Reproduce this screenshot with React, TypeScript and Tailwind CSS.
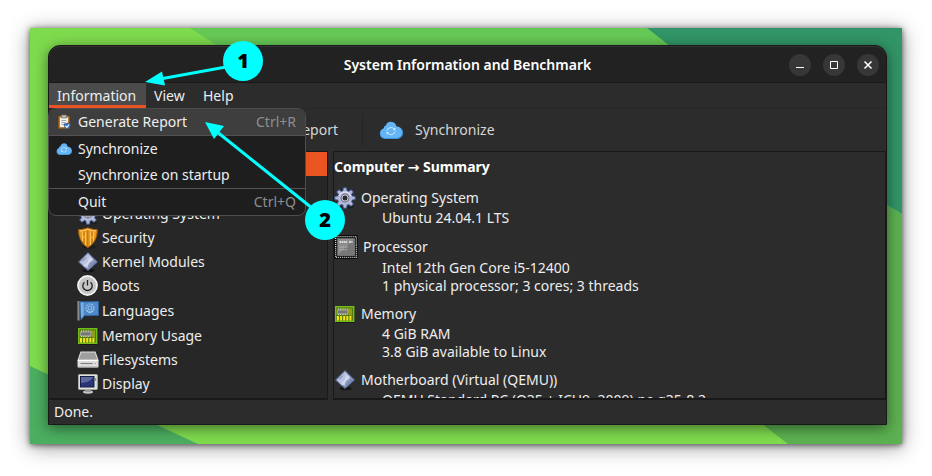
import type { ReactNode } from "react";

type IconProps = { size?: number };

function Svg({ size = 22, children }: { size?: number; children: ReactNode }) {
  return (
    <svg width={size} height={size} viewBox="0 0 22 22" fill="none" aria-hidden="true" className="shrink-0">
      {children}
    </svg>
  );
}

function GearIcon({ size }: IconProps) {
  const teeth = [0, 45, 90, 135, 180, 225, 270, 315];
  return (
    <Svg size={size}>
      <ellipse cx="12" cy="20" rx="8" ry="1.6" fill="#111" opacity=".5" />
      {teeth.map((angle) => (
        <path
          key={angle}
          d="M8.7 5 9.4.8h3.2L13.3 5z"
          fill="#b4b8d6"
          stroke="#35589a"
          strokeWidth=".9"
          transform={`rotate(${angle} 11 11)`}
        />
      ))}
      <circle cx="11" cy="11" r="7.2" fill="#b4b8d6" />
      <path d="M5 9.5a6.3 6.3 0 0 1 12 0" stroke="#dcdcee" strokeWidth="1.2" />
      <circle cx="11" cy="11" r="4.4" fill="#5c6587" />
      <circle cx="11" cy="11" r="3.1" fill="#2d2d2d" stroke="#d9dae8" strokeWidth="1" />
    </Svg>
  );
}

function ShieldIcon() {
  return (
    <Svg>
      <ellipse cx="12" cy="20" rx="7" ry="1.6" fill="#111" opacity=".5" />
      <path d="M1.6 2.6C5 2.6 8 2 10.8.8 13.600 2 16.600 2.600 20.200 2.600c.3 7.400-2.700 14.200-9.400 18C4.400 16.800 1.300 10 1.600 2.600z" fill="#e8991f" stroke="#a45d08" />
      <path d="M3 4c2.800-.2 5.200-.7 7.800-1.700C13.400 3.300 16 3.800 18.800 4" stroke="#ffd278" strokeWidth="1" />
      <path d="M5.500 5v9M8.500 5v13M13.500 4.500V18M16.500 5v9" stroke="#ffc45e" strokeWidth="1" />
      <path d="M7 4.500v4m0 3V17M10.800 3v17M15 4.500V9m0 3v5" stroke="#b06a10" strokeWidth=".9" />
    </Svg>
  );
}

function DiamondIcon() {
  return (
    <Svg>
      <ellipse cx="11.500" cy="19.500" rx="6" ry="1.800" fill="#0c0c0c" opacity=".7" />
      <path d="M11 1.500 20.500 11 11 19.500 1.500 11z" fill="#8795bd" stroke="#52618f" />
      <path d="M11 2.500 16 8l-8 8.500L2.800 11z" fill="#b9c2de" />
      <path d="m12.500 5.500 4 3.500-4.500 3-1.500 5-3.500-2.500 3.500-3.500z" fill="#dde2f0" opacity=".7" />
      <path d="m5 10.500 4-4M13 16l5-5" stroke="#6e7ba8" />
    </Svg>
  );
}

function PowerIcon() {
  return (
    <Svg>
      <circle cx="10.500" cy="10.500" r="9.600" fill="#cfcfcf" stroke="#f4f4f4" strokeWidth="1.600" />
      <circle cx="10.500" cy="10.500" r="8" fill="#c6c6c6" />
      <path d="M7.500 7.200a4.700 4.700 0 1 0 6 0M10.500 5v5.500" stroke="#1e1e1e" strokeWidth="1.300" />
    </Svg>
  );
}

function FlagIcon() {
  return (
    <Svg>
      <path d="M1.500 1v19.500" stroke="#8b8b85" strokeWidth="2.200" />
      <path d="M3 1.500c6 .8 12-.3 18.500 0v14c-5-.4-9 .6-14 0L4 20z" fill="#4c8acb" stroke="#2f609c" strokeWidth=".8" />
      <path d="M3.600 2.500h3v13l-2.600 3z" fill="#7aaede" />
      <circle cx="13" cy="8" r="4" stroke="#b5d4f0" strokeWidth="1.200" strokeDasharray="2 .8" opacity=".7" />
      <circle cx="13" cy="8" r="2" stroke="#a8caeb" opacity=".8" />
      <path d="M9.500 10.500c2 2.400 5 2.400 7 0" stroke="#c5def4" opacity=".8" />
    </Svg>
  );
}

function MemoryIcon() {
  return (
    <Svg>
      <path d="M2 19.500h18.500" stroke="#111" opacity=".6" />
      <rect x="1.700" y="3.700" width="18" height="14.600" fill="#567a0a" stroke="#72bd1d" strokeWidth="1.400" />
      <path d="M13 5.500h5v7h-3z" fill="#8f9f18" />
      <path d="M4 6.200h9.500M4 11.300h9.500" stroke="#e6e6e6" strokeWidth="1.200" strokeDasharray="1.200 1" />
      <rect x="3.600" y="7" width="10.300" height="3.800" fill="#777" stroke="#bbb" strokeWidth=".6" />
      <path d="M3 15.200h15.500" stroke="#f4e51d" strokeWidth="4.400" strokeDasharray="2 1.100" />
    </Svg>
  );
}

function DriveIcon() {
  return (
    <Svg>
      <path d="M3.500 2.500h15l3 8.500v6.500q0 1-1 1h-19q-1 0-1-1V11z" fill="#dedede" />
      <path d="M4.300 3.500h13.500l2.400 7H1.700z" fill="#9f9f9f" />
      <path d="M.8 11.500h20.500" stroke="#fff" />
      <path d="M3.500 14.500h12" stroke="#808080" strokeWidth="1.200" />
      <path d="M17.500 14.500h1.500M1 18h20" stroke="#aaa" />
    </Svg>
  );
}

function DisplayIcon() {
  return (
    <Svg>
      <ellipse cx="11" cy="19" rx="5" ry="1.700" fill="#c9c9c4" />
      <path d="M8 16h6v3H8z" fill="#999" />
      <rect x="1.500" y="1.500" width="18.800" height="15" rx=".8" fill="#e2e2dd" stroke="#aaa9a4" />
      <rect x="3.500" y="3.500" width="13.500" height="10.500" fill="#2b3474" stroke="#171c46" />
      <path d="M4 4h12.500c-3 4.500-7 5.500-12.500 6z" fill="#5e69a0" />
      <path d="M18.600 5v3" stroke="#888" />
    </Svg>
  );
}

function ChipIcon() {
  return (
    <Svg size={24}>
      <rect width="22" height="22" rx="2" fill="#0a0a0a" />
      <rect x="1.500" y="1.500" width="19" height="19" stroke="#d9d9d9" strokeWidth="1.300" strokeDasharray=".9 .9" />
      <rect x="2.800" y="2.800" width="16.400" height="16.400" fill="#8d8d8d" stroke="#222" strokeWidth=".5" />
      <path d="M3 19 19 3v16z" fill="#777" />
      <path d="M5 6.500h7M14 6.500h3" stroke="#dedede" strokeWidth="1.800" strokeDasharray="1.500 .5" />
      <path d="M5 11h8M5 13.500h7" stroke="#b9b9b9" strokeDasharray="2 .7" />
    </Svg>
  );
}

function PrinterIcon() {
  return (
    <Svg>
      <rect x="1" y="1.500" width="20" height="17" rx="1" fill="#9a9a9a" />
    </Svg>
  );
}

function CloudIcon({ width = 24 }: { width?: number }) {
  return (
    <svg width={width} viewBox="0 0 24 18" fill="none" aria-hidden="true" className="shrink-0">
      <path d="M5.500 18a5.400 5.400 0 0 1-.9-10.500A3.500 3.500 0 0 1 7 4.500 5.300 5.300 0 0 1 17.300 5.600 6.200 6.200 0 0 1 18.500 18z" fill="#3d93dc" />
      <path d="M5.500 17a5 5 0 0 1-.8-9.600A3.500 3.500 0 0 1 7 4.500a5.300 5.300 0 0 1 10.300 1.100A5.800 5.800 0 0 1 18.500 17z" fill="#64b5f6" />
      <path d="M8 9.700a4.100 4.100 0 0 1 7.400-1.400M16 10.400a4.100 4.100 0 0 1-7.400 1.500" stroke="#cfe8fd" strokeWidth="1" />
      <path d="m16.300 6.500.2 2.900-2.700-.6zM7.700 13.700l-.2-2.900 2.700.6z" fill="#cfe8fd" />
    </svg>
  );
}

function ReportIcon({ size = 16 }: IconProps) {
  return (
    <svg width={size} height={size} viewBox="0 0 16 16" fill="none" aria-hidden="true" className="shrink-0">
      <rect x="2.500" y="2" width="11" height="12.500" rx="1" fill="#b57a35" stroke="#875316" />
      <path d="M4 3.500h8V13H4z" fill="#f1f1ee" />
      <path d="M5.500 1h5v3h-5z" fill="#b9bab5" stroke="#6f706c" strokeWidth=".7" />
      <path d="M5.300 6.500h5M5.300 8.500h4M5.300 10.500h2.500" stroke="#a4a4a4" />
      <path d="M8 9.800c1.500 0 2.500-.4 3.300-1 .8.600 1.800 1 3.200 1 0 2.800-1.200 4.500-3.200 5.600C9.200 14.300 8 12.600 8 9.800z" fill="#3c70b3" stroke="#25508a" strokeWidth=".5" />
      <path d="m9.500 11.800 1.400 1.500 2.300-2.800" stroke="#fff" strokeWidth="1.100" />
    </svg>
  );
}

const tree = [
  { label: "", icon: <DisplayIcon />, height: "h-6", selected: true },
  { label: "", icon: <DriveIcon />, height: "h-[26px]" },
  { label: "Operating System", icon: <GearIcon />, height: "h-6" },
  { label: "Security", icon: <ShieldIcon />, height: "h-6" },
  { label: "Kernel Modules", icon: <DiamondIcon />, height: "h-6" },
  { label: "Boots", icon: <PowerIcon />, height: "h-6" },
  { label: "Languages", icon: <FlagIcon />, height: "h-[26px]" },
  { label: "Memory Usage", icon: <MemoryIcon />, height: "h-6" },
  { label: "Filesystems", icon: <DriveIcon />, height: "h-6" },
  { label: "Display", icon: <DisplayIcon />, height: "h-6" },
  { label: "", icon: <PrinterIcon />, height: "h-6" },
];

const summary = [
  { label: "Operating System", icon: <GearIcon />, height: "h-[22px]", lines: ["Ubuntu 24.04.1 LTS"] },
  {
    label: "Processor",
    icon: <ChipIcon />,
    height: "h-6",
    lines: ["Intel 12th Gen Core i5-12400", "1 physical processor; 3 cores; 3 threads"],
  },
  { label: "Memory", icon: <MemoryIcon />, height: "h-[22px]", lines: ["4 GiB RAM", "3.8 GiB available to Linux"] },
  {
    label: "Motherboard (Virtual (QEMU))",
    icon: <DiamondIcon />,
    height: "h-[22px]",
    lines: ["QEMU Standard PC (Q35 + ICH9, 2009) pc-q35-8.2"],
  },
];

function Wallpaper() {
  return (
    <svg
      className="absolute inset-0 size-full"
      viewBox="0 0 872 416"
      preserveAspectRatio="none"
      aria-hidden="true"
    >
      <rect width="872" height="416" fill="#7fdb4e" />
      <path d="M160 0H872V416H760L600 200 300 90z" fill="#66c955" />
      <path d="M617 0H872V186L800 143z" fill="#319567" />
      <path d="M872 186V416H758L732 396 800 143z" fill="#5cb151" />
      <path d="M0 338 168 416H0z" fill="#4bae60" />
    </svg>
  );
}

function WindowButton({ label, children }: { label: string; children: ReactNode }) {
  return (
    <button aria-label={label} className="flex size-[22px] items-center justify-center rounded-full bg-[#373737]">
      <svg width="10" height="10" viewBox="0 0 10 10" fill="none" stroke="#fff" aria-hidden="true">
        {children}
      </svg>
    </button>
  );
}

function MenuItem({ label, icon, shortcut, active }: { label: string; icon?: ReactNode; shortcut?: string; active?: boolean }) {
  return (
    <button
      role="menuitem"
      className={`flex h-[26px] w-full items-center pr-[9px] pl-[7px] text-left ${active ? "rounded-t-md bg-[#3e3e3e]" : ""}`}
    >
      <span className="flex w-[22px] shrink-0 items-center">{icon}</span>
      <span className="flex-1">{label}</span>
      {shortcut && <span className="text-[#8e8e8e]">{shortcut}</span>}
    </button>
  );
}

function InformationMenu() {
  return (
    <div
      role="menu"
      aria-label="Information"
      className="absolute top-[25px] -left-px z-10 w-[258px] overflow-hidden rounded-lg border border-[#4d4d4d] bg-[#1e1e1e]"
    >
      <MenuItem label="Generate Report" icon={<ReportIcon />} shortcut="Ctrl+R" active />
      <div role="separator" className="h-px bg-[#525252]" />
      <MenuItem label="Synchronize" icon={<CloudIcon width={16} />} />
      <MenuItem label="Synchronize on startup" />
      <div role="separator" className="h-px bg-[#525252]" />
      <MenuItem label="Quit" shortcut="Ctrl+Q" />
    </div>
  );
}

function Annotations() {
  const badge =
    "absolute flex size-10 items-center justify-center rounded-full bg-[#00ffff] font-['Open_Sans',sans-serif] text-xl font-extrabold text-black";
  return (
    <div className="pointer-events-none absolute inset-0 z-20">
      <svg width="400" height="260" viewBox="0 0 400 260" className="absolute top-0 left-0" aria-hidden="true">
        <g fill="#00ffff" stroke="#00ffff">
          <path d="M160 79 226 67M216 131l96 77" strokeWidth="3" />
          <path d="m145 82 17-10.500 3 14zM205 122l19 4-10 13z" stroke="none" />
        </g>
      </svg>
      <span className={`${badge} top-[41px] left-[223px]`}>1</span>
      <span className={`${badge} top-[200px] left-[305px]`}>2</span>
    </div>
  );
}

export default function App() {
  return (
    <div className="relative flex h-screen bg-white px-[30px] pt-7 pb-8 font-['Noto_Sans',sans-serif] text-sm text-[#eeeeee]">
      <div className="relative flex min-w-0 flex-1 pt-[17px] pr-[15px] pb-[19px] pl-[18px] shadow-[0_1px_6px_rgba(0,0,0,0.6),0_3px_20px_rgba(0,0,0,0.4)]">
        <Wallpaper />
        <main className="relative flex min-w-0 flex-1 flex-col rounded-t-xl border border-[#191919] bg-[#2c2c2c] shadow-[0_3px_14px_rgba(0,0,0,0.5)]">
          <header className="grid h-[37px] shrink-0 grid-cols-[1fr_auto_1fr] items-center rounded-t-xl border-t border-b border-t-[#333333] border-b-[#191919] bg-[#222222] px-[7px]">
            <h1 className="col-start-2 font-semibold text-white">System Information and Benchmark</h1>
            <div className="flex justify-end gap-3">
              <WindowButton label="Minimize">
                <path d="M1 7.500h8" />
              </WindowButton>
              <WindowButton label="Maximize">
                <path d="M1.500 1.500h7v7h-7z" />
              </WindowButton>
              <WindowButton label="Close">
                <path d="m1.500 1.500 7 7m0-7-7 7" strokeWidth="1.500" />
              </WindowButton>
            </div>
          </header>

          <nav className="relative flex h-[26px] shrink-0 border-b border-[#272727]">
            <button
              className="w-[97px] border-b-[3px] border-[#e95420] bg-[#4b4b4b] px-2 pt-[3px] text-left"
              aria-expanded="true"
            >
              Information
            </button>
            <button className="w-[49px] px-2 text-left">View</button>
            <button className="w-[49px] px-2 text-left">Help</button>
            <InformationMenu />
          </nav>

          <div className="flex h-[42px] shrink-0 items-center text-[#d6d6d6]">
            <button className="flex w-[313px] items-center justify-end gap-3 pr-6">
              <ReportIcon size={24} />
              Generate Report
            </button>
            <div className="h-8 w-px bg-[#242424]" />
            <button className="flex items-center gap-3 pl-4">
              <CloudIcon />
              Synchronize
            </button>
          </div>

          <div className="flex min-h-0 flex-1 gap-[5px]">
            <ul className="w-[279px] shrink-0 overflow-hidden border-t border-r border-b-2 border-[#191919] bg-[#272727]">
              {tree.map((row, i) => (
                <li
                  key={i}
                  className={`flex items-center gap-[3px] pl-7 ${row.height} ${row.selected ? "bg-[#e95420]" : ""}`}
                >
                  {row.icon}
                  {row.label}
                </li>
              ))}
            </ul>
            <section className="min-w-0 flex-1 overflow-hidden border-t border-r border-b-2 border-l border-[#191919]">
              <h2 className="h-[30px] pt-1 leading-[22px] font-bold text-white">
                Computer <span className="font-['DejaVu_Sans',sans-serif] leading-none">→</span> Summary
              </h2>
              <div className="mt-[5px] flex flex-col gap-2">
                {summary.map((item) => (
                  <div key={item.label}>
                    <h3 className={`flex items-center gap-[5px] ${item.height}`}>
                      {item.icon}
                      {item.label}
                    </h3>
                    {item.lines.map((line) => (
                      <p key={line} className="pl-12 leading-[18px] whitespace-nowrap">
                        {line}
                      </p>
                    ))}
                  </div>
                ))}
              </div>
            </section>
          </div>

          <footer className="flex h-6 shrink-0 items-center px-[5px]">Done.</footer>
        </main>
      </div>
      <Annotations />
    </div>
  );
}
